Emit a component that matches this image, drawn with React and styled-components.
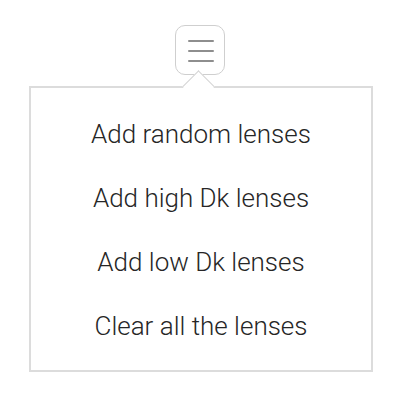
import React from "react";
import styled, { createGlobalStyle } from "styled-components";

const GlobalStyle = createGlobalStyle`
  html, body {
    margin: 0;
    padding: 0;
    background: #ffffff;
  }
  body {
    font-family: "Roboto", "Liberation Sans", sans-serif;
  }
`;

const actions = [
  "Add random lenses",
  "Add high Dk lenses",
  "Add low Dk lenses",
  "Clear all the lenses",
];

const Page = styled.div`
  display: flex;
  flex-direction: column;
  align-items: center;
  padding: 25px 4px 0 0;
  width: 406px;
  box-sizing: border-box;
`;

const MenuButton = styled.button`
  width: 50px;
  height: 50px;
  box-sizing: border-box;
  border: 1px solid #cfcfcf;
  border-radius: 10px;
  background: #ffffff;
  padding: 2px 0 0 2px;
  margin: 0 0 0 -3px;
  display: flex;
  flex-direction: column;
  align-items: center;
  justify-content: center;
  gap: 8px;
  cursor: pointer;
`;

const Bar = styled.span`
  display: block;
  width: 26px;
  height: 2px;
  background: #8e8e8e;
  border-radius: 1px;
`;

const Popover = styled.div`
  position: relative;
  margin-top: 11px;
  width: 344px;
  box-sizing: border-box;
  border: 2px solid #dcdcdc;
  background: #ffffff;
  padding: 14px 0 12px;
  display: flex;
  flex-direction: column;
`;

const Arrow = styled.span`
  position: absolute;
  top: -13px;
  left: 50%;
  width: 23px;
  height: 23px;
  margin-left: -14px;
  box-sizing: border-box;
  background: #ffffff;
  border-top: 1px solid #d4d4d4;
  border-left: 1px solid #d4d4d4;
  transform: rotate(45deg);
`;

const Item = styled.button`
  height: 64px;
  border: none;
  background: transparent;
  font-family: "Roboto", "Liberation Sans", sans-serif;
  font-weight: 300;
  font-size: 26px;
  color: #262626;
  cursor: pointer;
  padding: 0;
`;

export default function App() {
  return (
    <>
      <GlobalStyle />
      <Page>
        <MenuButton aria-label="Menu">
          <Bar />
          <Bar />
          <Bar />
        </MenuButton>
        <Popover>
          <Arrow />
          {actions.map((label) => (
            <Item key={label}>{label}</Item>
          ))}
        </Popover>
      </Page>
    </>
  );
}
